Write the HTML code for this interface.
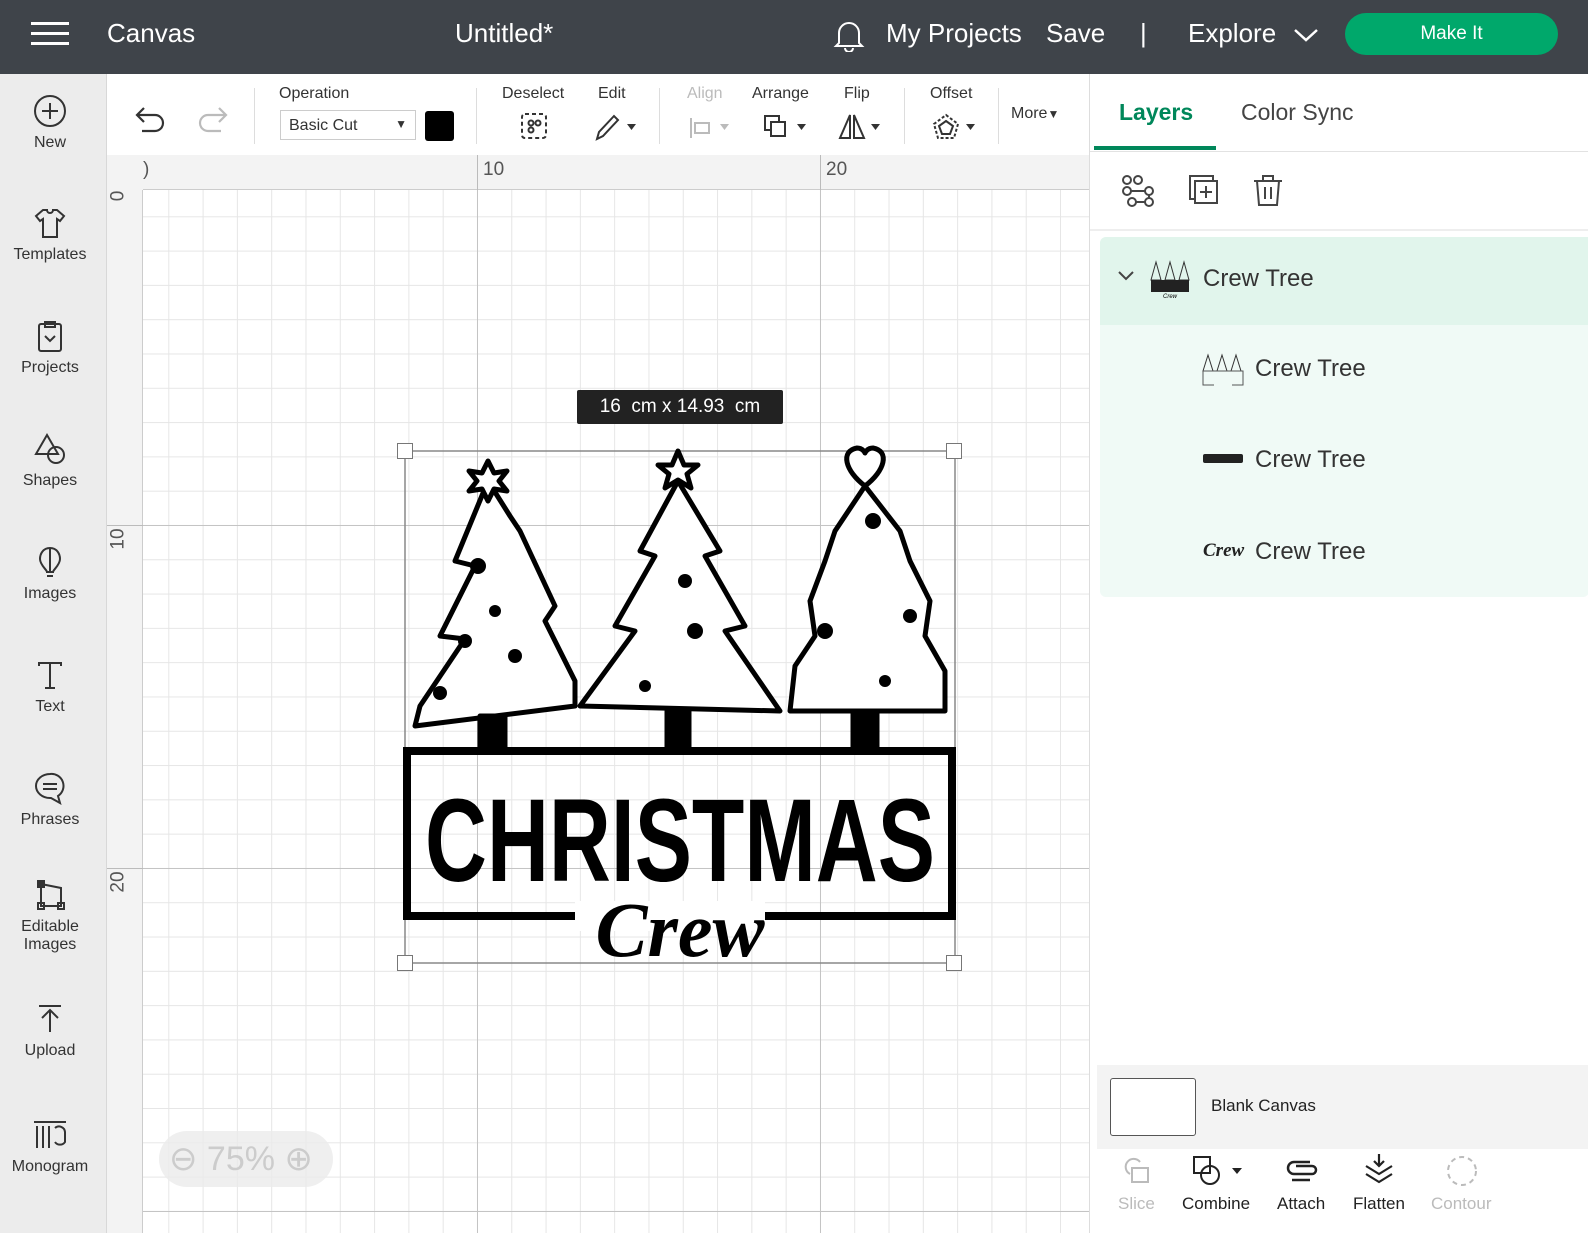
<!DOCTYPE html>
<html><head><meta charset="utf-8"><style>
*{box-sizing:border-box;margin:0;padding:0}
body{width:1588px;height:1233px;overflow:hidden;font-family:"Liberation Sans",sans-serif;background:#fff;position:relative;color:#222}
.top{position:absolute;left:0;top:0;width:1588px;height:74px;background:#3f444a;color:#fff}
.top span{position:absolute;font-size:26px;top:18px}
.side{position:absolute;left:0;top:74px;width:107px;height:1159px;background:#ececec;border-right:1px solid #d8d8d8}
.si{position:absolute;left:0;width:100px;text-align:center;font-size:16px;color:#333}
.si svg{display:block;margin:0 auto 6px}
.tb{position:absolute;left:107px;top:74px;width:982px;height:81px;background:#fff}
.tl{position:absolute;font-size:16px;color:#333;top:20px}
.vs{position:absolute;top:14px;width:1px;height:56px;background:#ddd}
.canvas{position:absolute;left:107px;top:155px;width:982px;height:1078px;background:#fff;overflow:hidden}
.grid{position:absolute;left:0;top:0;width:100%;height:100%;
background-image:
linear-gradient(90deg,#c4c4c4 1px,transparent 1px),linear-gradient(#c4c4c4 1px,transparent 1px),
linear-gradient(90deg,#e6e6e6 1px,transparent 1px),linear-gradient(#e6e6e6 1px,transparent 1px);
background-size:343px 343px,343px 343px,34.3px 34.3px,34.3px 34.3px;
background-position:27px 27px,27px 27px,27px 27px,27px 27px}
.rulerT{position:absolute;left:0;top:0;width:982px;height:35px;background:#f3f3f3;border-bottom:1px solid #ccc}
.rulerL{position:absolute;left:0;top:0;width:36px;height:1078px;background:#f3f3f3;border-right:1px solid #ccc}
.right{position:absolute;left:1089px;top:74px;width:499px;height:1159px;background:#fff;border-left:1px solid #ddd}
.lay{position:absolute;font-size:24px;color:#333}
</style></head><body>
<div class="top">
<div style="position:absolute;left:31px;top:22px;width:38px;height:3px;background:#fff;box-shadow:0 10px #fff,0 20px #fff"></div>
<span style="left:107px">Canvas</span>
<span style="left:455px">Untitled*</span>
<svg style="position:absolute;left:833px;top:18px" width="32" height="34" viewBox="0 0 32 34" fill="none" stroke="#fff" stroke-width="2"><path d="M6 25V15a10 10 0 0 1 20 0v10l3 3H3z M12 30a4 4 0 0 0 8 0"/></svg>
<span style="left:886px">My Projects</span>
<span style="left:1046px">Save</span>
<span style="left:1140px">|</span>
<span style="left:1188px">Explore</span>
<svg style="position:absolute;left:1293px;top:27px" width="26" height="16" fill="none" stroke="#fff" stroke-width="2.5"><path d="M2 3l11 10 11-10"/></svg>
<div style="position:absolute;left:1345px;top:13px;width:213px;height:42px;border-radius:21px;background:#00a86b;color:#fff;font-size:19px;text-align:center;line-height:42px">Make It</div>
</div>

<div class="side">
<div class="si" style="top:20px"><svg width="34" height="34" fill="none" stroke="#333" stroke-width="2"><circle cx="17" cy="17" r="15"/><path d="M17 9v16M9 17h16"/></svg>New</div>
<div class="si" style="top:132px"><svg width="34" height="34" fill="none" stroke="#333" stroke-width="2"><path d="M10 4l-7 6 4 5 3-2v18h14V13l3 2 4-5-7-6h-4a3 3 0 0 1-6 0z"/></svg>Templates</div>
<div class="si" style="top:245px"><svg width="34" height="34" fill="none" stroke="#333" stroke-width="2"><rect x="6" y="5" width="22" height="27" rx="2"/><path d="M12 3h10v5H12z M12 17l5 5 5-5"/></svg>Projects</div>
<div class="si" style="top:358px"><svg width="34" height="34" fill="none" stroke="#333" stroke-width="2"><path d="M14 3L3 22h22z"/><circle cx="23" cy="23" r="8"/></svg>Shapes</div>
<div class="si" style="top:471px"><svg width="34" height="34" fill="none" stroke="#333" stroke-width="2"><path d="M17 3c-7 0-10 6-10 11 0 6 7 11 7 13h6c0-2 7-7 7-13 0-5-3-11-10-11z M14 31h6 M17 4v23"/></svg>Images</div>
<div class="si" style="top:584px"><svg width="34" height="34" fill="none" stroke="#333" stroke-width="2"><path d="M6 8V5h22v3 M17 5v25 M12 30h10"/></svg>Text</div>
<div class="si" style="top:697px"><svg width="34" height="34" fill="none" stroke="#333" stroke-width="2"><path d="M17 3a14 12 0 1 0 0 24h1l9 5-2-7a12 12 0 0 0-8-22z M10 13h14 M10 18h14"/></svg>Phrases</div>
<div class="si" style="top:804px"><svg width="34" height="34" fill="none" stroke="#333" stroke-width="2"><path d="M8 6v22h20V10z"/><rect x="5" y="3" width="6" height="6" fill="#333"/><rect x="5" y="25" width="6" height="6"/><rect x="25" y="25" width="6" height="6"/></svg>Editable<br>Images</div>
<div class="si" style="top:928px"><svg width="34" height="34" fill="none" stroke="#333" stroke-width="2"><path d="M6 4h22 M17 30V9 M9 16l8-8 8 8"/></svg>Upload</div>
<div class="si" style="top:1044px"><svg width="38" height="34" fill="none" stroke="#333" stroke-width="2"><path d="M3 4h32 M6 8v22 M12 8v22 M18 8v22 M24 10a6 6 0 0 1 10 4v10a6 6 0 0 1-10 0"/></svg>Monogram</div>
</div>

<div class="tb">
<svg style="position:absolute;left:27px;top:31px" width="34" height="28" fill="none" stroke="#333" stroke-width="2.2"><path d="M10 3L3 10l7 7 M3 10h18a8 8 0 0 1 0 16H8"/></svg>
<svg style="position:absolute;left:88px;top:31px" width="34" height="28" fill="none" stroke="#bbb" stroke-width="2.2"><path d="M24 3l7 7-7 7 M31 10H13a8 8 0 0 0 0 16h13"/></svg>
<div class="vs" style="left:147px"></div>
<div class="tl" style="left:172px;top:11px">Operation</div>
<div style="position:absolute;left:173px;top:36px;width:136px;height:30px;border:1px solid #ccc;font-size:16px;padding:6px 8px;color:#333">Basic Cut<span style="position:absolute;right:8px;top:6px;font-size:12px">▼</span></div>
<div style="position:absolute;left:318px;top:37px;width:29px;height:30px;background:#000;border-radius:3px"></div>
<div class="vs" style="left:369px"></div>
<div class="tl" style="left:395px;top:11px">Deselect</div>
<svg style="position:absolute;left:413px;top:38px" width="30" height="30" fill="none" stroke="#333" stroke-width="2" stroke-dasharray="4 3"><rect x="2" y="2" width="24" height="24" rx="3"/><circle cx="11" cy="11" r="2.5" stroke-dasharray="0"/><circle cx="18" cy="11" r="2.5" stroke-dasharray="0"/><circle cx="11" cy="18" r="2.5" stroke-dasharray="0"/></svg>
<div class="tl" style="left:491px;top:11px">Edit</div>
<svg style="position:absolute;left:485px;top:38px" width="46" height="30" fill="none" stroke="#333" stroke-width="2"><path d="M5 27l2-7L22 4l4 4-15 16z"/><path d="M35 12h9l-4.5 6z" fill="#333" stroke="none"/></svg>
<div class="vs" style="left:552px"></div>
<div class="tl" style="left:580px;top:11px;color:#bbb">Align</div>
<svg style="position:absolute;left:582px;top:42px" width="44" height="24" fill="none" stroke="#bbb" stroke-width="2"><path d="M2 2v20"/><rect x="6" y="7" width="14" height="10"/><path d="M31 8h9l-4.5 6z" fill="#bbb" stroke="none"/></svg>
<div class="tl" style="left:645px;top:11px">Arrange</div>
<svg style="position:absolute;left:656px;top:38px" width="46" height="30" fill="none" stroke="#333" stroke-width="2"><rect x="2" y="4" width="14" height="14"/><rect x="8" y="10" width="14" height="14" fill="#fff"/><path d="M34 12h9l-4.5 6z" fill="#333" stroke="none"/></svg>
<div class="tl" style="left:737px;top:11px">Flip</div>
<svg style="position:absolute;left:731px;top:38px" width="46" height="30" fill="none" stroke="#333" stroke-width="2"><path d="M12 3L2 26h10z M16 3l10 23H16z"/><path d="M33 12h9l-4.5 6z" fill="#333" stroke="none"/></svg>
<div class="vs" style="left:797px"></div>
<div class="tl" style="left:823px;top:11px">Offset</div>
<svg style="position:absolute;left:825px;top:38px" width="46" height="30" fill="none" stroke="#333" stroke-width="2"><path d="M14 3l12 9-4 14H6L2 12z" stroke-dasharray="3 2"/><path d="M14 9l7 5-3 8h-8l-3-8z"/><path d="M34 12h9l-4.5 6z" fill="#333" stroke="none"/></svg>
<div class="vs" style="left:891px"></div>
<div class="tl" style="left:904px;top:31px">More<span style="font-size:12px">▼</span></div>
</div>

<div class="canvas">
<div class="grid"></div>
<div class="rulerT">
<span style="position:absolute;left:36px;top:4px;font-size:19px;color:#555">)</span>
<span style="position:absolute;left:376px;top:4px;font-size:19px;color:#555">10</span>
<span style="position:absolute;left:719px;top:4px;font-size:19px;color:#555">20</span>
<div style="position:absolute;left:370px;top:0;width:1px;height:35px;background:#bbb"></div>
<div style="position:absolute;left:713px;top:0;width:1px;height:35px;background:#bbb"></div>
</div>
<div class="rulerL">
<span style="position:absolute;left:6px;top:30px;font-size:19px;color:#555;transform:rotate(-90deg)">0</span>
<span style="position:absolute;left:1px;top:373px;font-size:19px;color:#555;transform:rotate(-90deg)">10</span>
<span style="position:absolute;left:1px;top:716px;font-size:19px;color:#555;transform:rotate(-90deg)">20</span>
<div style="position:absolute;left:0;top:370px;width:36px;height:1px;background:#bbb"></div>
<div style="position:absolute;left:0;top:713px;width:36px;height:1px;background:#bbb"></div>
</div>
<div style="position:absolute;left:0;top:0;width:36px;height:35px;background:#f3f3f3"></div>
<div style="position:absolute;left:470px;top:235px;width:206px;height:34px;background:#222;color:#fff;font-size:19px;text-align:center;line-height:34px;border-radius:2px">16&nbsp; cm x 14.93&nbsp; cm</div>
<svg style="position:absolute;left:288px;top:286px" width="570" height="530" viewBox="0 0 570 530">
<rect x="10" y="10" width="550" height="512" fill="none" stroke="#888" stroke-width="1.5"/>
<g fill="#fff" stroke="#000" stroke-width="5" stroke-linejoin="round">
<path d="M93 40 L60 120 L80 125 L45 195 L70 198 L25 265 L20 285 L180 265 L180 240 L150 180 L160 165 L125 90 L115 75z"/>
<rect x="85" y="275" width="25" height="35" fill="#000"/>
<path d="M93 20l6 12 13 -2 -8 10 8 10 -13-2-6 12-6-12-13 2 8-10-8-10 13 2z"/>
<path d="M283 40 L245 110 L260 115 L220 185 L240 190 L185 265 L385 270 L330 190 L350 185 L310 115 L325 110z"/>
<rect x="272" y="270" width="22" height="40" fill="#000"/>
<path d="M283 10l6 14h14l-11 9 4 14-13-8-13 8 4-14-11-9h14z"/>
<path d="M470 45 L440 90 L430 120 L415 160 L420 195 L400 225 L395 270 L550 270 L550 230 L530 195 L535 160 L515 120 L505 90z"/>
<rect x="458" y="270" width="24" height="40" fill="#000"/>
<path d="M470 45c-20-15-25-35-8-38 6 0 8 5 8 5s2-5 8-5c17 3 12 23-8 38z"/>
</g>
<g fill="#000"><circle cx="83" cy="125" r="8"/><circle cx="70" cy="200" r="7"/><circle cx="478" cy="80" r="8"/><circle cx="430" cy="190" r="8"/><circle cx="515" cy="175" r="7"/><circle cx="490" cy="240" r="6"/><circle cx="250" cy="245" r="6"/><circle cx="300" cy="190" r="8"/><circle cx="290" cy="140" r="7"/><circle cx="100" cy="170" r="6"/><circle cx="120" cy="215" r="7"/><circle cx="45" cy="252" r="7"/></g>
<rect x="12" y="310" width="545" height="165" fill="none" stroke="#000" stroke-width="8"/>
<rect x="180" y="460" width="190" height="30" fill="#fff"/>
<text x="285" y="440" text-anchor="middle" font-family="Liberation Sans" font-weight="bold" font-size="118" textLength="510" lengthAdjust="spacingAndGlyphs" fill="#000">CHRISTMAS</text>
<text x="285" y="515" text-anchor="middle" font-family="Liberation Serif" font-style="italic" font-weight="bold" font-size="78" fill="#000">Crew</text>
</svg>
<div style="position:absolute;left:290px;top:288px;width:16px;height:16px;border:1.5px solid #777;background:#fff"></div>
<div style="position:absolute;left:839px;top:288px;width:16px;height:16px;border:1.5px solid #777;background:#fff"></div>
<div style="position:absolute;left:290px;top:800px;width:16px;height:16px;border:1.5px solid #777;background:#fff"></div>
<div style="position:absolute;left:839px;top:800px;width:16px;height:16px;border:1.5px solid #777;background:#fff"></div>
<div style="position:absolute;left:52px;top:976px;width:174px;height:56px;border-radius:28px;background:rgba(235,235,235,.8);color:#ccc;font-size:34px;line-height:56px;padding-left:10px">⊖ 75% ⊕</div>
</div>

<div class="right">
<div style="position:absolute;left:29px;top:25px;font-size:23px;color:#00875a;font-weight:bold">Layers</div>
<div style="position:absolute;left:4px;top:72px;width:122px;height:4px;background:#00875a"></div>
<div style="position:absolute;left:151px;top:25px;font-size:23px;color:#444">Color Sync</div>
<div style="position:absolute;left:0;top:77px;width:499px;height:1px;background:#e2e2e2"></div>
<svg style="position:absolute;left:30px;top:99px" width="36" height="36" fill="none" stroke="#444" stroke-width="2"><circle cx="7" cy="7" r="4"/><circle cx="18" cy="7" r="4"/><circle cx="7" cy="18" r="4"/><circle cx="12" cy="29" r="4"/><circle cx="29" cy="18" r="4"/><circle cx="29" cy="29" r="4"/><path d="M11 18h14M29 22v3M16 29h9"/></svg>
<svg style="position:absolute;left:97px;top:99px" width="34" height="34" fill="none" stroke="#444" stroke-width="2"><path d="M7 26H3V3h23v4"/><rect x="8" y="8" width="22" height="22"/><path d="M19 13v12M13 19h12"/></svg>
<svg style="position:absolute;left:162px;top:99px" width="32" height="34" fill="none" stroke="#444" stroke-width="2"><path d="M2 8h28M11 8V3h10v5M5 8l2 24h18l2-24M13 14v12M19 14v12"/></svg>
<div style="position:absolute;left:0;top:155px;width:499px;height:2px;background:#eee"></div>
<div style="position:absolute;left:10px;top:163px;width:489px;height:360px;background:#f0faf6;border-radius:6px"></div>
<div style="position:absolute;left:10px;top:163px;width:489px;height:88px;background:#e1f5ec;border-radius:6px 0 0 0"></div>
<svg style="position:absolute;left:27px;top:196px" width="18" height="12" fill="none" stroke="#444" stroke-width="2"><path d="M2 2l7 7 7-7"/></svg>
<svg style="position:absolute;left:60px;top:186px" width="40" height="40"><path d="M6 2l-5 18h10zM20 2l-5 18h10zM34 2l-5 18h10z" fill="none" stroke="#333"/><rect x="1" y="20" width="38" height="12" fill="#222"/><text x="20" y="38" font-size="6" text-anchor="middle" font-style="italic">Crew</text></svg>
<div class="lay" style="left:113px;top:191px">Crew Tree</div>
<svg style="position:absolute;left:112px;top:279px" width="42" height="34"><path d="M6 2l-5 16h10zM20 2l-5 16h10zM34 2l-5 16h10z" fill="none" stroke="#333"/><path d="M1 18h40v14H30M12 32H1V18" fill="none" stroke="#555"/></svg>
<div class="lay" style="left:165px;top:281px">Crew Tree</div>
<div style="position:absolute;left:113px;top:380px;width:40px;height:9px;background:#222;border-radius:2px"></div>
<div class="lay" style="left:165px;top:372px">Crew Tree</div>
<div style="position:absolute;left:113px;top:466px;font-size:19px;font-family:'Liberation Serif';font-style:italic;font-weight:bold">Crew</div>
<div class="lay" style="left:165px;top:464px">Crew Tree</div>
<div style="position:absolute;left:7px;top:991px;width:492px;height:84px;background:#f3f3f3"></div>
<div style="position:absolute;left:20px;top:1004px;width:86px;height:58px;border:1.5px solid #555;border-radius:3px;background:#fff"></div>
<div style="position:absolute;left:121px;top:1022px;font-size:17px;color:#222">Blank Canvas</div>
<div style="position:absolute;top:1120px;left:0;width:499px;font-size:17px">
<span style="position:absolute;left:28px;color:#bbb">Slice</span>
<span style="position:absolute;left:92px;color:#222">Combine</span>
<span style="position:absolute;left:187px;color:#222">Attach</span>
<span style="position:absolute;left:263px;color:#222">Flatten</span>
<span style="position:absolute;left:341px;color:#bbb">Contour</span>
</div>
<svg style="position:absolute;left:30px;top:1080px" width="34" height="34" fill="none" stroke="#bbb" stroke-width="2"><path d="M10 20a8 8 0 1 1 10-12"/><path d="M12 14h16v14H12z"/></svg>
<svg style="position:absolute;left:102px;top:1080px" width="60" height="34" fill="none" stroke="#222" stroke-width="2"><rect x="2" y="3" width="16" height="16"/><circle cx="18" cy="21" r="9"/><path d="M40 14h10l-5 6z" fill="#222" stroke="none"/></svg>
<svg style="position:absolute;left:194px;top:1084px" width="36" height="26" fill="none" stroke="#222" stroke-width="2.5"><path d="M26 4H10a6 6 0 0 0 0 12h18a4 4 0 0 0 0-8H12"/><path d="M8 22h18"/></svg>
<svg style="position:absolute;left:272px;top:1078px" width="34" height="34" fill="none" stroke="#222" stroke-width="2.2"><path d="M17 2v12M12 9l5 5 5-5M4 14l13 8 13-8M4 22l13 8 13-8"/></svg>
<svg style="position:absolute;left:355px;top:1080px" width="34" height="34" fill="none" stroke="#bbb" stroke-width="2" stroke-dasharray="5 4"><circle cx="17" cy="17" r="14"/></svg>
</div>
</body></html>
